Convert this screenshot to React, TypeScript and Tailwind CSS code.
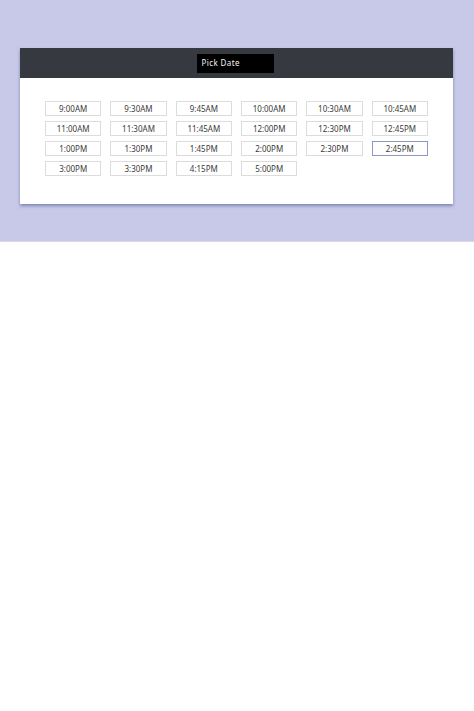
import { useState } from 'react';

const times = [
  '9:00AM', '9:30AM', '9:45AM', '10:00AM', '10:30AM', '10:45AM',
  '11:00AM', '11:30AM', '11:45AM', '12:00PM', '12:30PM', '12:45PM',
  '1:00PM', '1:30PM', '1:45PM', '2:00PM', '2:30PM', '2:45PM',
  '3:00PM', '3:30PM', '4:15PM', '5:00PM',
];

export default function App() {
  const [selected, setSelected] = useState('2:45PM');

  return (
    <div className="min-h-[711px] bg-white" style={{ fontFamily: '"Noto Sans", "Open Sans", sans-serif' }}>
      <div className="bg-[#c8c9e8] pt-[48px] pb-[37px] pl-[20px] pr-[21px] border-b border-[#d9d9ea]">
        <div className="bg-white shadow-[0_2px_3px_rgba(70,80,140,0.55)]">
          <div className="h-[30px] bg-[#363a40] flex items-center justify-center">
            <button className="w-[77px] h-[19px] mr-[3px] bg-black text-[#f4f4f4] text-[8px] font-normal text-left pl-[5px] tracking-[0.4px]">
              Pick Date
            </button>
          </div>
          <div className="pl-[25px] pr-[25px] pt-[23px] pb-[28px]">
            <div className="grid grid-cols-6 gap-x-[9px] gap-y-[5px]">
              {times.map((t) => (
                <button
                  key={t}
                  onClick={() => setSelected(t)}
                  className={
                    t === selected
                      ? 'h-[15px] border border-[#8f97c4] bg-white text-[8px] font-normal text-[#3a3a3a] flex items-center justify-center'
                      : 'h-[15px] border border-[#dcdcdc] bg-white text-[8px] font-normal text-[#3a3a3a] flex items-center justify-center'
                  }
                >
                  {t}
                </button>
              ))}
            </div>
          </div>
        </div>
      </div>
    </div>
  );
}
